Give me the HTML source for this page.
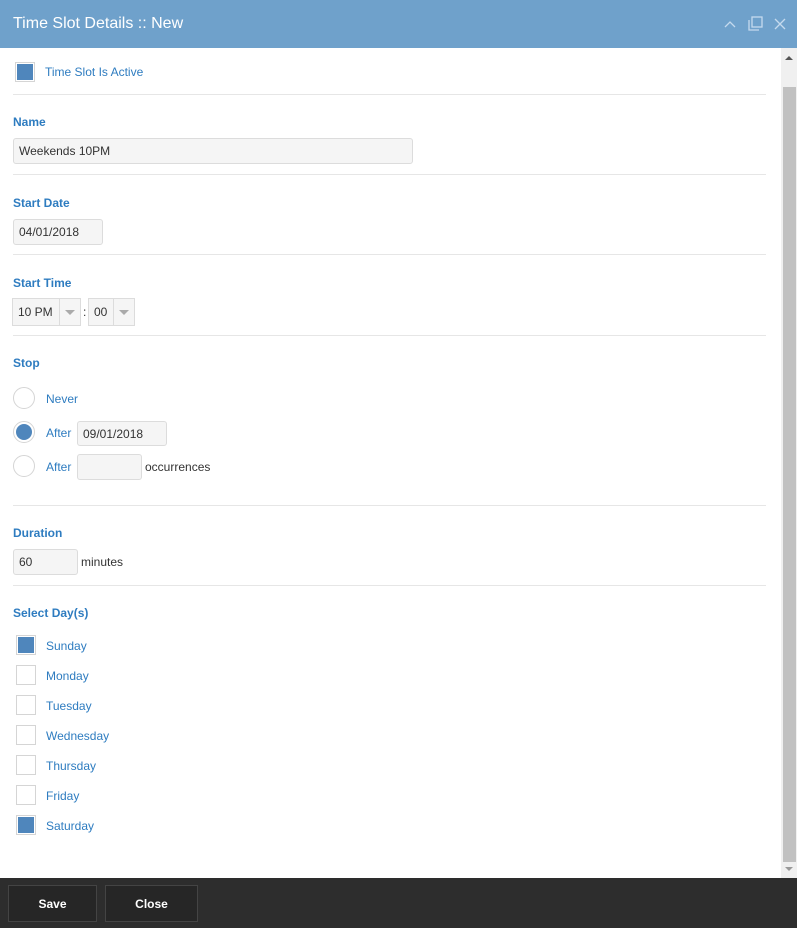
<!DOCTYPE html><html><head><style>
body{margin:0;width:797px;height:928px;position:relative;overflow:hidden;font-family:"Liberation Sans",sans-serif;font-size:12px;background:#fff}
.a{position:absolute}
.hr{position:absolute;left:13px;width:753px;height:1px;background:#e6e6e6}
.lbl{position:absolute;left:13px;font-weight:bold;color:#2e7cc0;font-size:12px}
.blue{color:#2e7cc0}
.inp{position:absolute;background:#f5f5f5;border:1px solid #dcdcdc;border-radius:3px;box-sizing:border-box;color:#333;padding-left:5px;display:flex;align-items:center}
.rad{position:absolute;left:13px;width:22px;height:22px;border:1px solid #d5d5d5;border-radius:50%;box-sizing:border-box;background:#fff}
.cb{position:absolute;left:16px;width:20px;height:20px;border:1px solid #d5d5d5;box-sizing:border-box;background:#fff}
.cb.on::after{content:"";position:absolute;left:1px;top:1px;width:16px;height:16px;background:#4f86bc}
.dl{position:absolute;left:46px;color:#2e7cc0}
</style></head><body>
<div class="a" style="left:0;top:0;width:797px;height:48px;background:#6fa1cb"></div>
<div class="a" style="left:13px;top:15px;color:#fff;font-size:16px">Time Slot Details :: New</div>
<svg class="a" style="left:720px;top:14px" width="70" height="20"><path d="M5 13 L10 8 L15 13" stroke="#c5daee" fill="none" stroke-width="1.3"/><rect x="32" y="3" width="10" height="10" stroke="#c5daee" fill="none" stroke-width="1.3"/><path d="M29 6 V16 H39" stroke="#c5daee" fill="none" stroke-width="1.3"/><path d="M55 5 L65 15 M65 5 L55 15" stroke="#c5daee" stroke-width="1.3"/></svg>
<div class="a" style="left:781px;top:48px;width:16px;height:830px;background:#f0f0f0"></div>
<div class="a" style="left:783px;top:87px;width:13px;height:775px;background:#c1c1c1"></div>
<div class="a" style="left:785px;top:56px;width:0;height:0;border-left:4px solid transparent;border-right:4px solid transparent;border-bottom:4px solid #555"></div>
<div class="a" style="left:785px;top:867px;width:0;height:0;border-left:4px solid transparent;border-right:4px solid transparent;border-top:4px solid #999"></div>

<div class="cb on" style="left:15px;top:62px"></div>
<div class="a blue" style="left:45px;top:65px">Time Slot Is Active</div>
<div class="hr" style="top:94px"></div>
<div class="lbl" style="top:115px">Name</div>
<div class="inp" style="left:13px;top:138px;width:400px;height:26px">Weekends 10PM</div>
<div class="hr" style="top:174px"></div>
<div class="lbl" style="top:196px">Start Date</div>
<div class="inp" style="left:13px;top:219px;width:90px;height:26px">04/01/2018</div>
<div class="hr" style="top:254px"></div>
<div class="lbl" style="top:276px">Start Time</div>
<div class="inp" style="left:12px;top:298px;width:69px;height:28px;border-radius:0">10 PM</div>
<div class="a" style="left:59px;top:298px;width:1px;height:28px;background:#dcdcdc"></div>
<div class="a" style="left:65px;top:310px;border-left:5px solid transparent;border-right:5px solid transparent;border-top:5px solid #aaa"></div>
<div class="a" style="left:83px;top:305px;color:#333">:</div>
<div class="inp" style="left:88px;top:298px;width:47px;height:28px;border-radius:0">00</div>
<div class="a" style="left:113px;top:298px;width:1px;height:28px;background:#dcdcdc"></div>
<div class="a" style="left:119px;top:310px;border-left:5px solid transparent;border-right:5px solid transparent;border-top:5px solid #aaa"></div>
<div class="hr" style="top:335px"></div>
<div class="lbl" style="top:356px">Stop</div>
<div class="rad" style="top:387px"></div><div class="dl" style="top:392px">Never</div>
<div class="rad" style="top:421px"><div class="a" style="left:2px;top:2px;width:16px;height:16px;border-radius:50%;background:#4f86bc"></div></div>
<div class="dl" style="top:426px">After</div>
<div class="inp" style="left:77px;top:421px;width:90px;height:25px">09/01/2018</div>
<div class="rad" style="top:455px"></div><div class="dl" style="top:460px">After</div>
<div class="inp" style="left:77px;top:454px;width:65px;height:26px"></div>
<div class="a" style="left:145px;top:460px;color:#333">occurrences</div>
<div class="hr" style="top:505px"></div>
<div class="lbl" style="top:526px">Duration</div>
<div class="inp" style="left:13px;top:549px;width:65px;height:26px">60</div>
<div class="a" style="left:81px;top:555px;color:#333">minutes</div>
<div class="hr" style="top:585px"></div>
<div class="lbl" style="top:606px">Select Day(s)</div>
<div class="cb on" style="top:635px"></div><div class="dl" style="top:639px">Sunday</div>
<div class="cb" style="top:665px"></div><div class="dl" style="top:669px">Monday</div>
<div class="cb" style="top:695px"></div><div class="dl" style="top:699px">Tuesday</div>
<div class="cb" style="top:725px"></div><div class="dl" style="top:729px">Wednesday</div>
<div class="cb" style="top:755px"></div><div class="dl" style="top:759px">Thursday</div>
<div class="cb" style="top:785px"></div><div class="dl" style="top:789px">Friday</div>
<div class="cb on" style="top:815px"></div><div class="dl" style="top:819px">Saturday</div>

<div class="a" style="left:0;top:878px;width:797px;height:50px;background:#2d2d2d"></div>
<div class="a" style="left:8px;top:885px;width:87px;height:35px;border:1px solid #444;background:#262626;color:#fff;font-weight:bold;display:flex;align-items:center;justify-content:center">Save</div>
<div class="a" style="left:105px;top:885px;width:91px;height:35px;border:1px solid #444;background:#262626;color:#fff;font-weight:bold;display:flex;align-items:center;justify-content:center">Close</div>
</body></html>
